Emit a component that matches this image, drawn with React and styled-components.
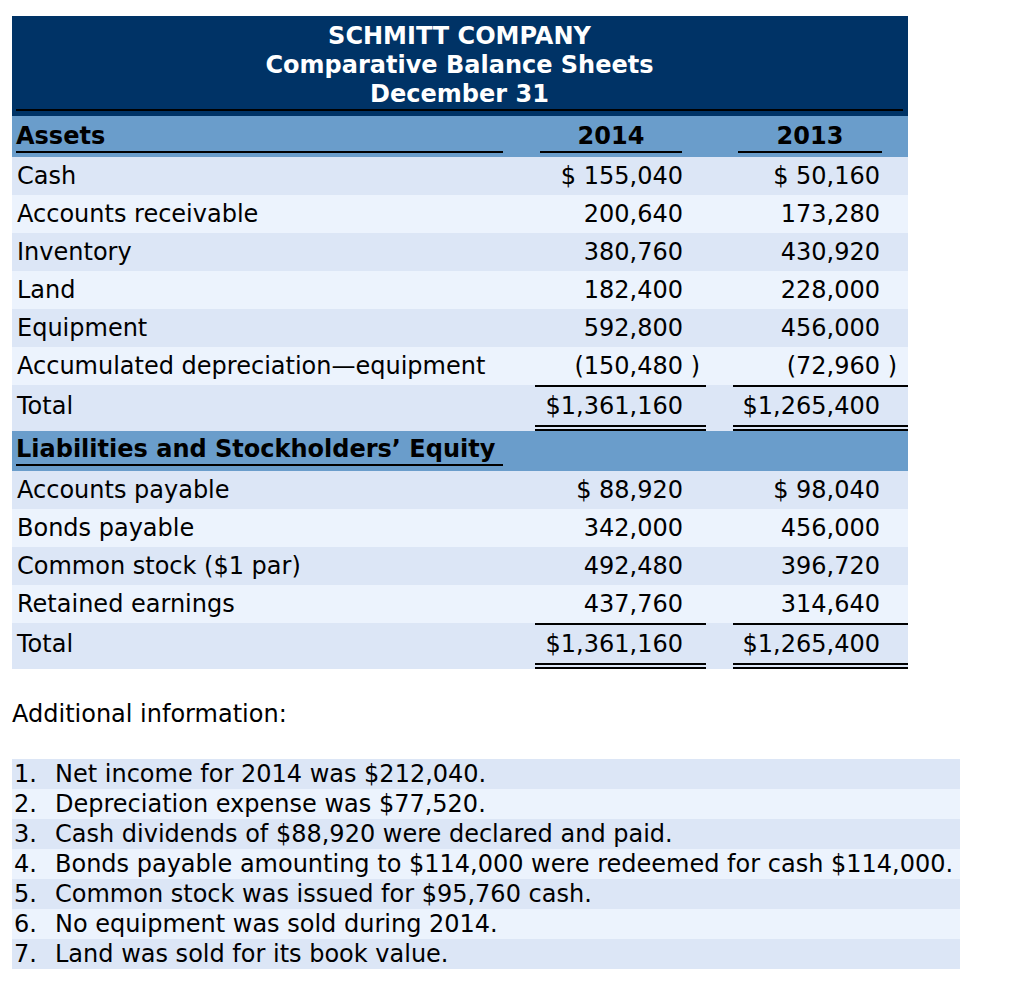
import React from 'react';
import styled, {createGlobalStyle} from 'styled-components';

const GlobalStyle = createGlobalStyle`
body {
    margin: 0;
    background: #ffffff;
    font-family: "DejaVu Sans", Verdana, sans-serif;
    color: #000000;
}
`

const colors = {
    navy: '#003366',
    band: '#6a9dcb',
    dark: '#dce6f6',
    light: '#ecf3fd',
}

const Page = styled.div`
padding: 16px 0 20px 12px;
font-size: 24px;
`

const Sheet = styled.div`
width: 896px;
`

const Header = styled.div`
background: ${colors.navy};
padding: 6px 5px 5px 4px;
`

const TitleBox = styled.div`
border-bottom: 2px solid #000;
text-align: center;
color: #ffffff;
font-weight: bold;
line-height: 29px;
`

const Row = styled.div`
display: grid;
grid-template-columns: 523px 171px 27px 175px;
background: ${({shade}) => colors[shade]};
`

const BandRow = styled(Row)`
padding: ${({pad}) => pad};
font-weight: bold;
line-height: 30px;
`

const BandLabel = styled.div`
margin: 0 32px 0 4px;
border-bottom: 2px solid #000;
white-space: nowrap;
`

const YearLabel = styled.div`
margin: ${({last}) => last ? '0 26px 0 5px' : '0 24px 0 5px'};
border-bottom: 2px solid #000;
text-align: center;
`

const Label = styled.div`
padding: ${({total}) => total ? '2px 0 6px 5px' : '0 0 0 5px'};
line-height: 38px;
white-space: nowrap;
`

const Amount = styled.div`
padding-right: ${({last}) => last ? '28px' : '23px'};
text-align: right;
line-height: 38px;
white-space: nowrap;
${({total}) => total && `
    border-top: 2px solid #000;
    border-bottom: 6px double #000;
`}
`

// the closing paren of a negative hangs past the column of digits
const Hang = styled.span`
white-space: pre;
margin-right: -17px;
`

const Gap = styled.div``

const InfoTitle = styled.div`
margin-top: 30px;
line-height: 30px;
`

const InfoList = styled.ol`
list-style: none;
margin: 30px 0 0;
padding: 0;
width: 948px;
`

const InfoItem = styled.li`
display: flex;
background: ${({shade}) => colors[shade]};
line-height: 30px;
`

const ItemNumber = styled.span`
width: 43px;
padding-left: 2px;
box-sizing: border-box;
`

const assets = [
    {label: 'Cash', a: '$ 155,040', b: '$ 50,160'},
    {label: 'Accounts receivable', a: '200,640', b: '173,280'},
    {label: 'Inventory', a: '380,760', b: '430,920'},
    {label: 'Land', a: '182,400', b: '228,000'},
    {label: 'Equipment', a: '592,800', b: '456,000'},
    {label: 'Accumulated depreciation\u2014equipment', a: '(150,480', b: '(72,960', neg: true},
]

const liabilities = [
    {label: 'Accounts payable', a: '$ 88,920', b: '$ 98,040'},
    {label: 'Bonds payable', a: '342,000', b: '456,000'},
    {label: 'Common stock ($1 par)', a: '492,480', b: '396,720'},
    {label: 'Retained earnings', a: '437,760', b: '314,640'},
]

const notes = [
    'Net income for 2014 was $212,040.',
    'Depreciation expense was $77,520.',
    'Cash dividends of $88,920 were declared and paid.',
    'Bonds payable amounting to $114,000 were redeemed for cash $114,000.',
    'Common stock was issued for $95,760 cash.',
    'No equipment was sold during 2014.',
    'Land was sold for its book value.',
]

const shadeFor = (i) => i % 2 === 0 ? 'dark' : 'light';

const Value = ({children, neg}) => (
    <>
        {children}
        {neg && <Hang> )</Hang>}
    </>
)

const LineRows = ({rows}) => rows.map((row, i) => (
    <Row key={row.label} shade={shadeFor(i)}>
        <Label>{row.label}</Label>
        <Amount><Value neg={row.neg}>{row.a}</Value></Amount>
        <Gap />
        <Amount last><Value neg={row.neg}>{row.b}</Value></Amount>
    </Row>
))

const TotalRow = ({shade}) => (
    <Row shade={shade}>
        <Label total>Total</Label>
        <Amount total>$1,361,160</Amount>
        <Gap />
        <Amount total last>$1,265,400</Amount>
    </Row>
)

const App = () => {
    return (
        <Page>
            <GlobalStyle />
            <Sheet>
                <Header>
                    <TitleBox>
                        <div>SCHMITT COMPANY</div>
                        <div>Comparative Balance Sheets</div>
                        <div>December 31</div>
                    </TitleBox>
                </Header>

                <BandRow shade="band" pad="5px 0 4px">
                    <BandLabel>Assets</BandLabel>
                    <YearLabel>2014</YearLabel>
                    <Gap />
                    <YearLabel last>2013</YearLabel>
                </BandRow>
                <LineRows rows={assets} />
                <TotalRow shade="dark" />

                <BandRow shade="band" pad="3px 0 5px">
                    <BandLabel>Liabilities and Stockholders{'\u2019'} Equity</BandLabel>
                </BandRow>
                <LineRows rows={liabilities} />
                <TotalRow shade="dark" />
            </Sheet>

            <InfoTitle>Additional information:</InfoTitle>
            <InfoList>
                {notes.map((note, i) => (
                    <InfoItem key={note} shade={shadeFor(i)}>
                        <ItemNumber>{i + 1}.</ItemNumber>
                        <span>{note}</span>
                    </InfoItem>
                ))}
            </InfoList>
        </Page>
    );
}

export default App;
